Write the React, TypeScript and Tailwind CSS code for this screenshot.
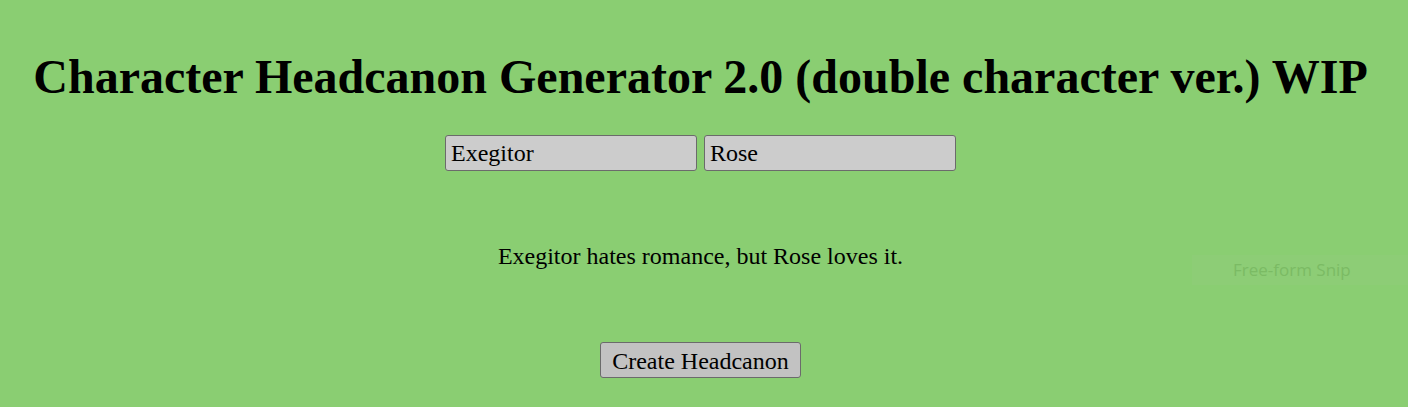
export default function App() {
  return (
    <div className="relative min-h-[407px] bg-[#8ace72] font-['Liberation_Serif',serif] text-black overflow-hidden">
      <div className="flex flex-col items-center pt-[49px] pr-[7px]">
        <h1 className="text-[48px] leading-[55px] font-bold text-center whitespace-nowrap">
          Character Headcanon Generator 2.0 (double character ver.) WIP
        </h1>
        <div className="flex gap-[7px] mt-[31px]">
          <input
            defaultValue="Exegitor"
            className="w-[252px] h-[36px] bg-[#cccccc] border border-[#6b6b6b] rounded-[3px] px-[5px] text-[24px] outline-none font-['Liberation_Serif',serif]"
          />
          <input
            defaultValue="Rose"
            className="w-[252px] h-[36px] bg-[#cccccc] border border-[#6b6b6b] rounded-[3px] px-[5px] text-[24px] outline-none font-['Liberation_Serif',serif]"
          />
        </div>
        <p className="text-[24px] leading-[28px] mt-[71px] text-center">Exegitor hates romance, but Rose loves it.</p>
        <button className="mt-[72px] w-[201px] h-[36px] bg-[#c2c2c2] border border-[#6b6b6b] rounded-[3px] text-[24px] font-['Liberation_Serif',serif]">
          Create Headcanon
        </button>
      </div>
      <div className="absolute left-[1192px] top-[255px] w-[216px] h-[30px] bg-[#8dcd76] flex items-center pl-[41px]">
        <span className="text-[17px] text-[#7bbb64] font-['Open_Sans',sans-serif]">Free-form Snip</span>
      </div>
    </div>
  );
}
